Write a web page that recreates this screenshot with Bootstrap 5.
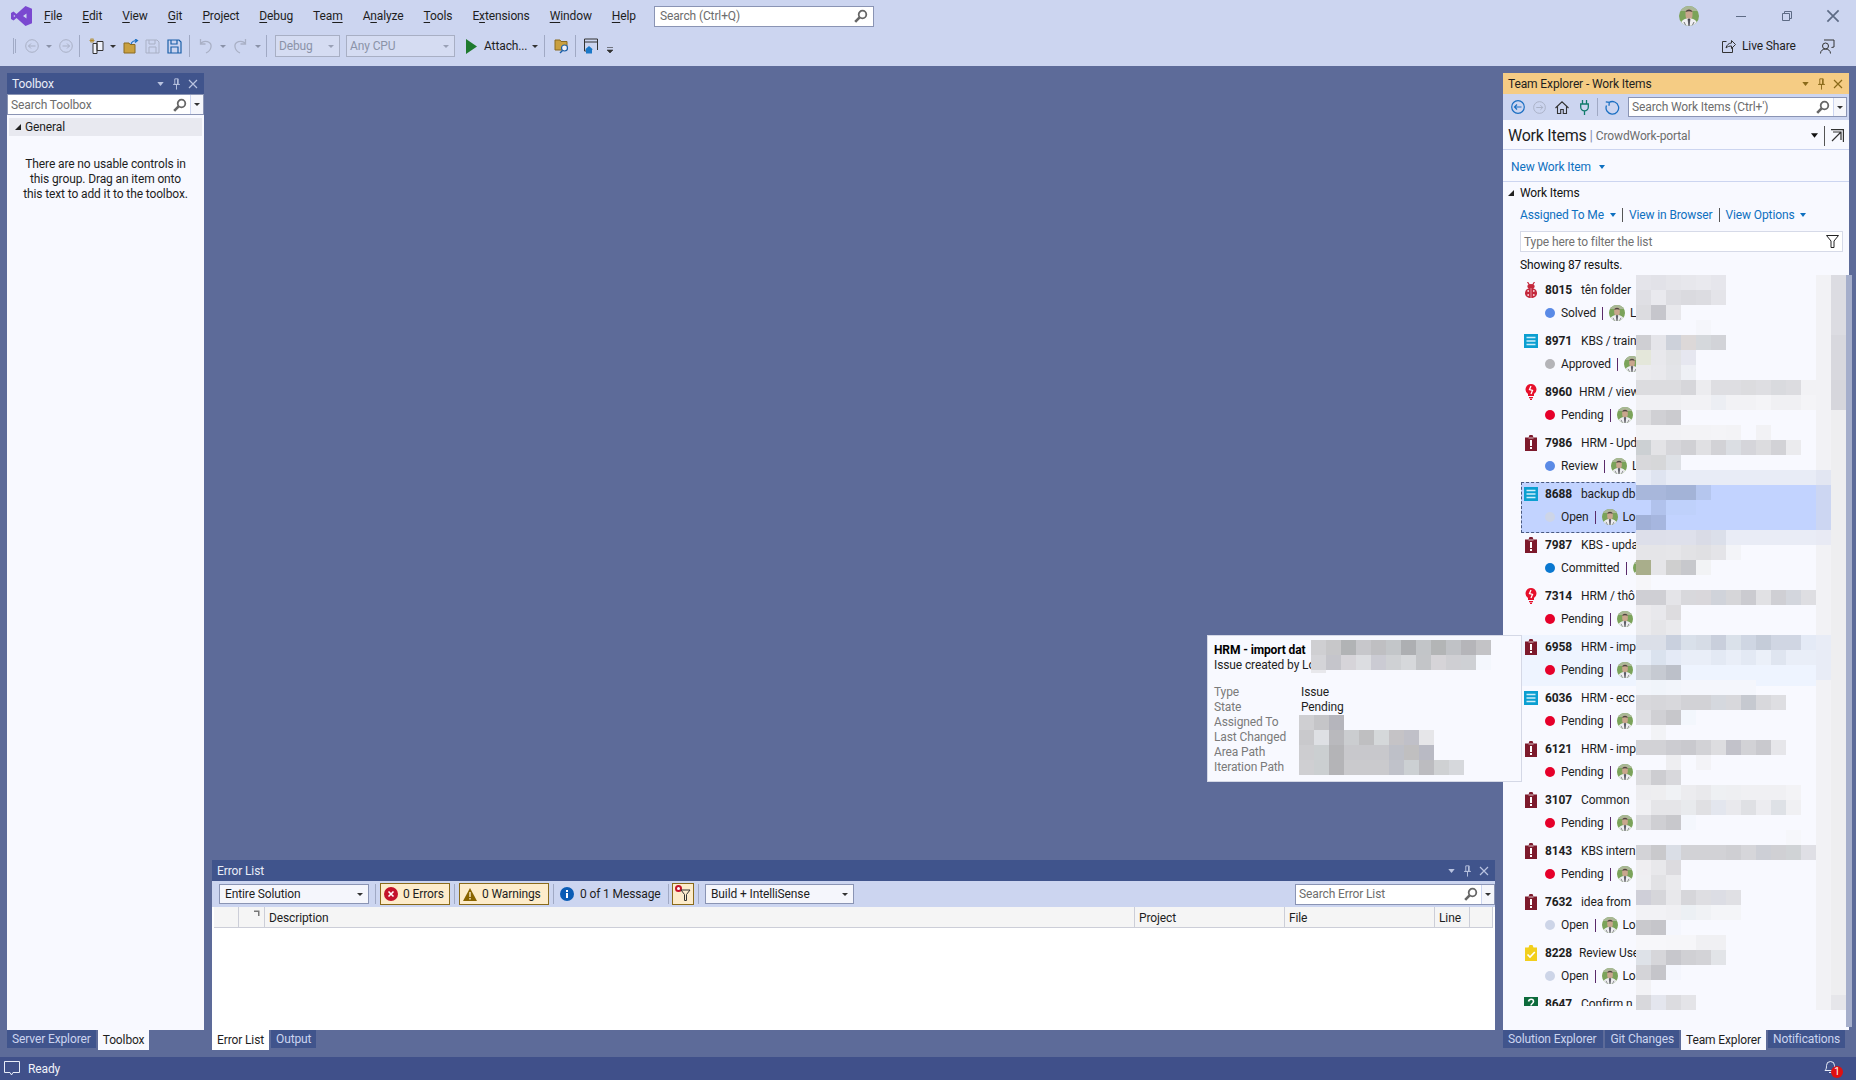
<!DOCTYPE html>
<html lang="en">
<head>
<meta charset="utf-8">
<title>Visual Studio</title>
<link href="https://cdn.jsdelivr.net/npm/bootstrap@5.3.0/dist/css/bootstrap.min.css" rel="stylesheet">
<style>
html,body{height:1080px;overflow:hidden}
body{background:#5d6b99;font:12px/16px Roboto,"Noto Sans",sans-serif;color:#1e1e1e;letter-spacing:-.12px;white-space:nowrap}
svg{display:block;flex:none}
.chrome{height:66px;background:#ccd5f0}
.menurow{height:32px;padding-left:11px}
.menus{gap:20px;margin-left:12px;color:#1e1e1e}
.menus u{text-underline-offset:2px}
.qsearch{width:220px;height:21px;margin-left:18px;background:#fff;border:1px solid #8a94b4;color:#6d6d6d;padding:0 5px}
.tools{height:28px;padding-left:12px}
.vsep{width:1px;height:22px;background:#a0a9c4;margin:0 9px;flex:none}
.combo{height:22px;background:#d5dcf2;border:1px solid #a8afc4;color:#8b93a8;padding:0 3px}
.tri{width:0;height:0;border-left:3px solid transparent;border-right:3px solid transparent;border-top:3px solid #333;flex:none}
.main{height:991px;padding:7px 4px 7px 7px}
.leftcol{width:197px}
.centercol{width:1283px;margin:0 8px}
.rightcol{width:346px}
.ptitle{height:21px;background:#40548c;color:#e9edf8;padding:0 6px 0 5px;flex:none}
.ptitle .gl{gap:7px}
.ptitle.active{background:#f5cc84;color:#1e1e1e}
.pbody{background:#f8f9ff}
.sbox{background:#fff;height:21px;border:1px solid #8a94b4;color:#6d6d6d;padding:0 3px}
.sbox .dd{width:13px;height:100%;border-left:1px solid #ccd5f0;background:#f5f6fb;margin:0 -3px 0 3px}
.general{height:18px;margin:3px 2px 0;background:#e8e9f0;padding-left:6px}
.emptymsg{margin:21px 12px 0;text-align:center;line-height:15px;color:#1e1e1e;white-space:normal}
.tabs{height:20px;gap:2px;flex:none}
.tabx{height:18px;background:#40548c;color:#ccd5f0;padding:0 5px}
.tabx.on{height:20px;background:#f8f9ff;color:#1e1e1e}
.tabx.onw{height:20px;background:#fff;color:#1e1e1e}
.elist{height:170px;margin-top:auto;background:#fff;flex:none}
.etools{height:26px;background:#ccd5f0;padding:0 0 0 7px}
.ecombo{height:20px;background:#f5f6fc;border:1px solid #8a94b4;padding:0 5px;color:#1e1e1e}
.esep{width:1px;height:20px;background:#a0a9c4;margin:0 4px;flex:none}
.ebtn{height:22px;background:#fdeccb;border:1px solid #8a6a1a;padding:0 6px 0 3px;gap:5px}
.ehead{height:21px;background:#f5f5f5;border-bottom:1px solid #ccced8;margin-left:2px;margin-right:2px}
.ecol{height:100%;border-right:1px solid #ccced8;padding:1px 0 0 4px;flex:none}
.ebody{height:102px;background:#fff}
.tebar{height:26px;background:#ccd5f0;padding:0 0 0 8px;flex:none}
.tehead{height:30px;border-bottom:1px solid #ccd5f0;padding:2px 5px 0}
.tehead b{font-weight:400;font-size:16px;letter-spacing:-.25px;color:#1e1e1e}
.lnk{color:#0e70c0}
.tri.blue{border-top-color:#0e70c0;border-left-width:3.5px;border-right-width:3.5px;border-top-width:4px}
.thinsep{width:1px;height:14px;background:#555;flex:none}
.newrow{height:32px;border-bottom:1px solid #ccd5f0;padding:2px 0 0 8px}
.wrap{flex:1 1 0;position:relative;min-height:0}
.sechead{height:22px;padding-left:5px;color:#111;gap:6px}
.links{height:22px;padding-left:17px}
.filterbox{height:21px;margin:5px 6px 0 17px;background:#fff;border:1px solid #d6dae8;color:#717171;padding:0 3px 0 3px}
.showing{height:26px;padding-left:17px;color:#111}
.wlist{height:728px;overflow:hidden;position:relative}
.witem{height:51px;width:310px;margin-left:18px;padding-left:2px;border:1px solid transparent}
.witem.sel{background:#c2d3ff;border:1px dashed #4a5a80;border-right-color:transparent}
.witem.hov{background:#eef4ff}
.wclip{width:115px;overflow:hidden;height:100%}
.wl1{height:22px;gap:7px}
.wl1 b{font-weight:700;color:#1e1e1e;width:29px}
.wl1 span{color:#1e1e1e}
.wl2{height:24px;gap:5px;padding-left:21px;color:#1e1e1e}
.dotx{width:10px;height:10px;border-radius:50%;flex:none;margin-right:1px}
.pipe{width:1px;height:13px;background:#5a2a6a;flex:none;margin:0 1px}
.mosaic{position:absolute;pointer-events:none}
.tip{position:absolute;left:1207px;top:635px;width:315px;height:147px;background:#f8f9ff;border:1px solid #d4d8e6;padding:7px 6px;line-height:15px}
.tip b{font-weight:700;color:#000}
.tipgrid{margin-top:12px}
.tipk{width:87px;color:#7a7a7a}
.statusbar{height:23px;background:#40508a;color:#f1f3fa;padding:0 12px 0 4px}
</style>
</head>
<body>
<svg width="0" height="0" style="position:absolute">
<defs>
<clipPath id="avc"><circle cx="10" cy="10" r="10"/></clipPath>
<symbol id="av" viewBox="0 0 20 20"><g clip-path="url(#avc)"><rect width="20" height="20" fill="#7ba35a"/><rect width="20" height="5" fill="#a9b896"/><path d="M6.500 5c1-2.500 6-2.500 7 0v4a3.500 4.500 0 0 1-7 0z" fill="#c9a68e"/><path d="M6.500 6c.5-3.500 6.500-3.500 7 0-2-1-5-1-7 0z" fill="#4a4540"/><path d="M1.500 20c0-6 4-7.500 8.500-7.500s8.500 1.500 8.500 7.500z" fill="#efeff2"/><path d="M9 13l1 7 1-7zM5 16l2 4M15 16l-2 4" fill="#3f3f48" stroke="#3f3f48" stroke-width=".7"/></g></symbol>
<symbol id="doc" viewBox="0 0 14 14"><rect width="14" height="14" fill="#0b9fd1"/><path d="M2.500 3.500h9M2.500 7h9M2.500 10.500h9" stroke="#cfeefa" stroke-width="1.400"/></symbol>
<symbol id="iss" viewBox="0 0 14 16"><path d="M1 2.500h3.500L5.500 0h3l1 2.500H13V16H1z" fill="#7d1a2c"/><path d="M6 5h2v6H6zM6 12h2v2H6z" fill="#fff"/><path d="M4.500 2.500h5v1h-5z" fill="#fff" opacity=".75"/></symbol>
<symbol id="bulb" viewBox="0 0 14 16"><path d="M7 0a5.400 5.400 0 0 0-3 9.900V12h6V9.900A5.400 5.400 0 0 0 7 0z" fill="#e6102b"/><path d="M5 13h4v1.200H5zM6 14.800h2V16H6z" fill="#e6102b"/><path d="M7 2 5.500 5.500 8.500 6.500 7 10" stroke="#fff" stroke-width="1.300" fill="none"/></symbol>
<symbol id="bug" viewBox="0 0 14 16"><path d="M3.500 0l2 3M10.500 0l-2 3" stroke="#c4283c" stroke-width="1.200"/><ellipse cx="7" cy="4.500" rx="3.600" ry="2.400" fill="#c4283c"/><path d="M7 6C3 6 1 8.500 1 11.200 1 14 3.500 16 7 16s6-2 6-4.800C13 8.500 11 6 7 6z" fill="#c4283c"/><path d="M7 6v10" stroke="#f0b8c0" stroke-width=".7"/><circle cx="4.200" cy="9" r=".9" fill="#f8d8dc"/><circle cx="9.800" cy="9" r=".9" fill="#f8d8dc"/><circle cx="4.200" cy="13" r=".9" fill="#f8d8dc"/><circle cx="9.800" cy="13" r=".9" fill="#f8d8dc"/></symbol>
<symbol id="chk" viewBox="0 0 14 16"><path d="M1 2.500h3.500L5.500 0h3l1 2.500H13V16H1z" fill="#f2cf1d"/><path d="M3.500 9.500l2.500 2.500 4.800-5" stroke="#fff" stroke-width="1.600" fill="none"/></symbol>
<symbol id="qm" viewBox="0 0 14 14"><rect width="14" height="14" fill="#0d6b3c"/><path d="M4.500 4.500C5 1.500 9.500 1.500 9.500 4.500c0 2-2.500 2-2.500 4M7 10v2" stroke="#fff" stroke-width="1.600" fill="none"/></symbol>
<symbol id="mag" viewBox="0 0 14 14"><circle cx="8.500" cy="5.500" r="3.800" fill="none" stroke="#666" stroke-width="1.800"/><path d="M5.600 8.400 1.200 12.800" stroke="#666" stroke-width="2.600"/></symbol>
<symbol id="pin" viewBox="0 0 10 14"><path d="M3 1h4v6.500H3zM1 7.500h8M5 8v5.500M6.200 1.500v5.500" stroke="currentColor" stroke-width="1.100" fill="none"/></symbol>
<symbol id="xx" viewBox="0 0 10 10"><path d="M1 1l8 8M9 1l-8 8" stroke="currentColor" stroke-width="1.200"/></symbol>
<symbol id="dn" viewBox="0 0 8 5"><path d="M0 0h8L4 5z" fill="currentColor"/></symbol>
</defs>
</svg>

<header class="chrome">
  <div class="menurow d-flex align-items-center">
    <svg width="21" height="20" viewBox="0 0 21 20"><path fill-rule="evenodd" d="M14.500 0 21 2.800V17.200L14.500 20 5.500 12 2.500 14.500 0 13V7L2.500 5.500 5.500 8zM15.500 7.500 12 10 15.500 12.500zM2.800 8.800v2.400L4.300 10z" fill="#7a48d0"/></svg>
    <nav class="menus d-flex">
      <span><u>F</u>ile</span><span><u>E</u>dit</span><span><u>V</u>iew</span><span><u>G</u>it</span><span><u>P</u>roject</span><span><u>D</u>ebug</span><span>Tea<u>m</u></span><span>A<u>n</u>alyze</span><span><u>T</u>ools</span><span>E<u>x</u>tensions</span><span><u>W</u>indow</span><span><u>H</u>elp</span>
    </nav>
    <div class="qsearch d-flex align-items-center justify-content-between"><span>Search (Ctrl+Q)</span><svg width="14" height="14"><use href="#mag"/></svg></div>
    <div class="ms-auto d-flex align-items-center" style="margin-right:16px">
      <svg width="20" height="20"><use href="#av"/></svg>
      <svg width="10" height="10" viewBox="0 0 10 10" style="margin-left:37px"><path d="M0 5.500h10" stroke="#5d6b85"/></svg>
      <svg width="10" height="10" viewBox="0 0 10 10" style="margin-left:36px"><path d="M.5 2.500h7v7h-7zM2.500 2.500v-2h7v7h-2" stroke="#5d6b85" fill="none"/></svg>
      <svg width="14" height="14" viewBox="0 0 10 10" style="margin-left:34px;color:#5d6b85"><use href="#xx"/></svg>
    </div>
  </div>
  <div class="tools d-flex align-items-center">
    <svg width="5" height="17" viewBox="0 0 5 17"><path d="M1 1h1M3 2h1M1 3h1M3 4h1M1 5h1M3 6h1M1 7h1M3 8h1M1 9h1M3 10h1M1 11h1M3 12h1M1 13h1M3 14h1M1 15h1" stroke="#77809c"/></svg>
    <svg style="margin-left:8px" width="14" height="14" viewBox="0 0 14 14"><circle cx="7" cy="7" r="6.300" fill="none" stroke="#a9b0c5"/><path d="M10.500 7h-7M6 4.500 3.500 7 6 9.500" stroke="#a9b0c5" fill="none"/></svg>
    <div class="tri" style="margin-left:7px;border-top-color:#8a92a8"></div>
    <svg style="margin-left:7px" width="14" height="14" viewBox="0 0 14 14"><circle cx="7" cy="7" r="6.300" fill="none" stroke="#a9b0c5"/><path d="M3.500 7h7M8 4.500 10.500 7 8 9.500" stroke="#a9b0c5" fill="none"/></svg>
    <div class="vsep" style="margin-left:6px"></div>
    <svg width="16" height="16" viewBox="0 0 16 16"><path d="M3 0v5M.5 2.500h5M1 .8l4 3.400M5 .8 1 4.200" stroke="#b08a2a" stroke-width=".9"/><path d="M4 5.500h4v10H4zM8 3.500h6v9H8z" fill="#eef1fa" stroke="#333"/></svg>
    <div class="tri" style="margin-left:5px"></div>
    <svg style="margin-left:7px" width="16" height="15" viewBox="0 0 16 15"><path d="M1 4h5l1 1.500h5V14H1z" fill="#c9a040" stroke="#8a6a20"/><path d="M8 5c1-3 3-3.500 6-3.500M12 0l2.500 1.500L12 3.500" stroke="#1b6fc2" fill="none" stroke-width="1.200"/></svg>
    <svg style="margin-left:6px" width="15" height="15" viewBox="0 0 15 15" fill="none" stroke="#a9b0c5"><path d="M1 1h11l2 2v11H1zM4 1v4h6V1M4 14V8h7v6"/></svg>
    <svg style="margin-left:7px" width="15" height="15" viewBox="0 0 15 15" fill="none" stroke="#1a5fa8" stroke-width="1.200"><path d="M1 1h11l2 2v11H1zM4 1v4h6V1M4 14V8h7v6"/></svg>
    <div class="vsep" style="margin-left:7px"></div>
    <svg width="14" height="16" viewBox="0 0 14 16" fill="none" stroke="#a9b0c5" stroke-width="1.300"><path d="M2 5c3-3 11-2 10 4-.5 3-3 5-5 6M1.500 1v5h5"/></svg>
    <div class="tri" style="margin-left:7px;border-top-color:#8a92a8"></div>
    <svg style="margin-left:7px" width="14" height="16" viewBox="0 0 14 16" fill="none" stroke="#a9b0c5" stroke-width="1.300"><path d="M12 5C9 2 1 3 2 9c.5 3 3 5 5 6M12.500 1v5h-5"/></svg>
    <div class="tri" style="margin-left:8px;border-top-color:#8a92a8"></div>
    <div class="vsep" style="margin-right:8px;margin-left:5px"></div>
    <div class="combo d-flex align-items-center justify-content-between" style="width:65px"><span>Debug</span><div class="tri" style="border-top-color:#99a0b5;margin-right:2px"></div></div>
    <div class="combo d-flex align-items-center justify-content-between" style="width:109px;margin-left:6px"><span>Any CPU</span><div class="tri" style="border-top-color:#99a0b5;margin-right:2px"></div></div>
    <svg style="margin-left:11px" width="11" height="15" viewBox="0 0 11 15"><path d="M0 0l11 7.500L0 15z" fill="#1e7a2e"/></svg>
    <span style="margin-left:7px;width:43px">Attach...</span>
    <div class="tri" style="margin-left:5px"></div>
    <div class="vsep" style="margin-left:6px"></div>
    <svg width="16" height="16" viewBox="0 0 16 16"><path d="M1 2h5l1 1.500h6V12H1z" fill="#c9a040" stroke="#8a6a20"/><circle cx="10.500" cy="10" r="3" fill="#eef1fa" stroke="#1a5fa8" stroke-width="1.200"/><path d="M8.500 12.500 6 15" stroke="#1a5fa8" stroke-width="1.500"/></svg>
    <div class="vsep" style="margin-left:5px;margin-right:8px"></div>
    <svg width="15" height="16" viewBox="0 0 15 16"><path d="M.5 1h13v11" fill="none" stroke="#333"/><path d="M.5 1v12h6M.5 4h13" fill="none" stroke="#333"/><path d="M2 15.500v-4h-1l4-3.500 4 3.500H8v4z" fill="#1a78c8"/></svg>
    <svg style="margin-left:8px;margin-top:8px" width="6" height="7" viewBox="0 0 6 7"><path d="M0 .5h6M0 3h6l-3 3z" fill="#333" stroke="#333" stroke-width=".6"/></svg>
    <div class="ms-auto d-flex align-items-center" style="margin-right:21px">
      <svg width="14" height="14" viewBox="0 0 14 14" fill="none" stroke="#333"><path d="M4.500 2.500H.5v11h10V9M4 9c.5-3 3-5 5.500-5V1.500l4 4-4 4V7C7.500 7 5.500 7.500 4 9z"/></svg>
      <span style="margin-left:6px;width:53px">Live Share</span>
      <svg style="margin-left:25px" width="15" height="15" viewBox="0 0 15 15" fill="none" stroke="#333"><circle cx="5.500" cy="7" r="3"/><path d="M.5 14.500c0-6 10-6 10 0M4 1h10v7l-2.500.5"/></svg>
    </div>
  </div>
</header>

<main class="main d-flex">
  <section class="leftcol d-flex flex-column">
    <div class="ptitle d-flex align-items-center justify-content-between">
      <span>Toolbox</span>
      <div class="gl d-flex align-items-center" style="color:#b9c3e0"><svg width="7" height="4" style="margin-right:1px"><use href="#dn"/></svg><svg width="9" height="12"><use href="#pin"/></svg><svg width="10" height="10"><use href="#xx"/></svg></div>
    </div>
    <div class="pbody flex-grow-1">
      <div class="sbox d-flex align-items-center justify-content-between"><span class="flex-grow-1">Search Toolbox</span><svg width="14" height="14"><use href="#mag"/></svg><div class="dd d-flex align-items-center justify-content-center"><div class="tri"></div></div></div>
      <div class="general d-flex align-items-center gap-1"><svg width="6" height="6" viewBox="0 0 6 6"><path d="M6 0v6H0z" fill="#222"/></svg><span>General</span></div>
      <p class="emptymsg mb-0">There are no usable controls in this group. Drag an item onto this text to add it to the toolbox.</p>
    </div>
    <div class="tabs d-flex"><div class="tabx d-flex align-items-center">Server Explorer</div><div class="tabx on d-flex align-items-center">Toolbox</div></div>
  </section>

  <section class="centercol d-flex flex-column">
    <div class="elist d-flex flex-column">
      <div class="ptitle d-flex align-items-center justify-content-between">
        <span>Error List</span>
        <div class="gl d-flex align-items-center" style="color:#b9c3e0"><svg width="7" height="4" style="margin-right:1px"><use href="#dn"/></svg><svg width="9" height="12"><use href="#pin"/></svg><svg width="10" height="10"><use href="#xx"/></svg></div>
      </div>
      <div class="etools d-flex align-items-center">
        <div class="ecombo d-flex align-items-center justify-content-between" style="width:150px"><span>Entire Solution</span><div class="tri"></div></div>
        <div class="esep" style="margin-left:6px"></div>
        <div class="ebtn d-flex align-items-center" style="width:70px"><svg width="14" height="14" viewBox="0 0 14 14"><circle cx="7" cy="7" r="7" fill="#c4122a"/><path d="M4.500 4.500l5 5M9.500 4.500l-5 5" stroke="#fff" stroke-width="1.600"/></svg><span>0 Errors</span></div>
        <div class="esep"></div>
        <div class="ebtn d-flex align-items-center" style="width:90px"><svg width="14" height="13" viewBox="0 0 14 13"><path d="M7 0l7 13H0z" fill="#8a6400"/><path d="M6.300 4h1.400v5H6.300zM6.300 10h1.400v1.500H6.300z" fill="#fdeccb"/></svg><span>0 Warnings</span></div>
        <div class="esep"></div>
        <svg style="margin-left:2px" width="14" height="14" viewBox="0 0 14 14"><circle cx="7" cy="7" r="7" fill="#0a5cb5"/><path d="M6 6h2v5H6zM6 3h2v2H6z" fill="#fff"/></svg>
        <span style="margin-left:6px;width:78px">0 of 1 Message</span>
        <div class="esep" style="margin-left:10px;margin-right:3px"></div>
        <div class="ebtn d-flex align-items-center justify-content-center" style="width:22px;padding:0"><svg width="16" height="18" viewBox="0 0 16 18"><circle cx="3.500" cy="3.500" r="2.500" fill="#fff" stroke="#c4122a" stroke-width="2"/><path d="M6 5h9l-3.500 4.500v6h-2v-6z" fill="none" stroke="#333"/></svg></div>
        <div class="esep"></div>
        <div class="ecombo d-flex align-items-center justify-content-between" style="width:149px;margin-left:2px"><span>Build + IntelliSense</span><div class="tri"></div></div>
        <div class="sbox ms-auto d-flex align-items-center justify-content-between" style="width:200px"><span class="flex-grow-1">Search Error List</span><svg width="14" height="14"><use href="#mag"/></svg><div class="dd d-flex align-items-center justify-content-center"><div class="tri"></div></div></div>
      </div>
      <div class="ehead d-flex align-items-center">
        <div class="ecol" style="width:25px"></div>
        <div class="ecol position-relative" style="width:26px"><svg class="position-absolute" style="left:15px;top:3px" width="6" height="6" viewBox="0 0 6 6"><path d="M0 .5h5.500V6H4V2H0z" fill="#777"/></svg></div>
        <div class="ecol d-flex align-items-center" style="width:870px">Description</div>
        <div class="ecol d-flex align-items-center" style="width:150px">Project</div>
        <div class="ecol d-flex align-items-center" style="width:150px">File</div>
        <div class="ecol d-flex align-items-center" style="width:35px">Line</div>
        <div class="ecol" style="width:23px"></div>
      </div>
      <div class="ebody"></div>
    </div>
    <div class="tabs d-flex"><div class="tabx onw d-flex align-items-center">Error List</div><div class="tabx d-flex align-items-center">Output</div></div>
  </section>

  <section class="rightcol d-flex flex-column">
    <div class="ptitle active d-flex align-items-center justify-content-between">
      <span>Team Explorer - Work Items</span>
      <div class="gl d-flex align-items-center" style="color:#8a6a1a"><svg width="7" height="4" style="margin-right:1px"><use href="#dn"/></svg><svg width="9" height="12"><use href="#pin"/></svg><svg width="10" height="10"><use href="#xx"/></svg></div>
    </div>
    <div class="tebar d-flex align-items-center">
      <svg width="14" height="14" viewBox="0 0 14 14"><circle cx="7" cy="7" r="6.300" fill="none" stroke="#1b6fc2" stroke-width="1.200"/><path d="M10.500 7h-7M6 4.500 3.500 7 6 9.500" stroke="#1b6fc2" fill="none" stroke-width="1.200"/></svg>
      <svg style="margin-left:8px" width="13" height="13" viewBox="0 0 14 14"><circle cx="7" cy="7" r="6.300" fill="none" stroke="#a9b0c5"/><path d="M3.500 7h7M8 4.500 10.500 7 8 9.500" stroke="#a9b0c5" fill="none"/></svg>
      <svg style="margin-left:9px" width="14" height="13" viewBox="0 0 14 13" fill="none" stroke="#333" stroke-width="1.100"><path d="M.5 7 7 .8 13.500 7M2.500 5.500v7h3.200V8.500h2.600v4h3.200v-7"/></svg>
      <svg style="margin-left:11px" width="9" height="15" viewBox="0 0 9 15" fill="none" stroke="#0f7a6a" stroke-width="1.300"><path d="M2.500 0v4M6.500 0v4M.7 4h7.600v3a3.800 3.800 0 0 1-7.600 0zM4.500 10.500V15"/></svg>
      <div class="vsep" style="margin-left:8px;margin-right:7px;height:18px"></div>
      <svg width="15" height="15" viewBox="0 0 15 15" fill="none" stroke="#1b6fc2" stroke-width="1.300"><path d="M4 2.500a6.300 6.300 0 1 1-2.500 3M.8 1.800l3.500.5-.3 3.500"/></svg>
      <div class="sbox d-flex align-items-center justify-content-between" style="width:219px;margin-left:8px;height:20px"><span class="flex-grow-1">Search Work Items (Ctrl+')</span><svg width="14" height="14"><use href="#mag"/></svg><div class="dd d-flex align-items-center justify-content-center"><div class="tri"></div></div></div>
    </div>
    <div class="pbody wrap">
      <div class="tehead d-flex align-items-center">
        <b>Work Items</b><span style="margin:0 3px;color:#8a94b4;font-size:14px">|</span><span style="color:#6d6d6d">CrowdWork-portal</span>
        <svg class="ms-auto" width="7" height="5" style="color:#111"><use href="#dn"/></svg>
        <div class="thinsep" style="height:20px;margin:0 6px"></div>
        <svg width="13" height="13" viewBox="0 0 13 13" fill="none" stroke="#333" stroke-width="1.200"><path d="M0 .6h13M12.400 0v13M2 3h8v8M10 3 1 12"/></svg>
      </div>
      <div class="newrow d-flex align-items-center gap-2"><span class="lnk">New Work Item</span><div class="tri blue"></div></div>
      <div class="sechead d-flex align-items-center"><svg width="6" height="6" viewBox="0 0 6 6"><path d="M6 0v6H0z" fill="#222"/></svg><span>Work Items</span></div>
      <div class="links d-flex align-items-center"><span class="lnk">Assigned To Me</span><div class="tri blue" style="margin-left:6px"></div><div class="thinsep" style="margin:0 6px"></div><span class="lnk">View in Browser</span><div class="thinsep" style="margin:0 6px"></div><span class="lnk">View Options</span><div class="tri blue" style="margin-left:6px"></div></div>
      <div class="filterbox d-flex align-items-center justify-content-between"><span>Type here to filter the list</span><svg width="13" height="13" viewBox="0 0 13 13" fill="none" stroke="#222"><path d="M.5.500h12L8 6v6.500H5V6z"/></svg></div>
      <div class="showing d-flex align-items-center">Showing 87 results.</div>
      <div class="wlist" id="wl"></div>
    </div>
    <div class="tabs d-flex"><div class="tabx d-flex align-items-center" style="padding-right:7px">Solution Explorer</div><div class="tabx d-flex align-items-center">Git Changes</div><div class="tabx on d-flex align-items-center">Team Explorer</div><div class="tabx d-flex align-items-center">Notifications</div></div>
  </section>
</main>

<footer class="statusbar d-flex align-items-center">
  <svg width="16" height="15" viewBox="0 0 16 15" fill="none" stroke="#e8ecf8"><path d="M.5.500h15v11H9L7.500 14 6 11.500H.5z"/></svg>
  <span style="margin-left:8px">Ready</span>
  <div class="ms-auto position-relative" style="width:20px;height:20px">
    <svg width="13" height="15" viewBox="0 0 13 15" fill="none" stroke="#e8ecf8"><path d="M1 11.500c1.500-1.500 1.500-3 1.500-5a4 4 0 0 1 8 0c0 2 0 3.500 1.500 5zM5 13.500h3"/></svg>
    <span class="position-absolute d-flex align-items-center justify-content-center" style="left:7px;top:7px;width:12px;height:12px;border-radius:50%;background:#e01010;color:#fff;font-size:10px;line-height:1">1</span>
  </div>
</footer>

<div class="tip">
  <div><b>HRM - import dat</b></div>
  <div>Issue created by Lo</div>
  <div class="tipgrid">
    <div class="d-flex"><span class="tipk">Type</span><span>Issue</span></div>
    <div class="d-flex"><span class="tipk">State</span><span>Pending</span></div>
    <div class="d-flex"><span class="tipk">Assigned To</span></div>
    <div class="d-flex"><span class="tipk">Last Changed</span></div>
    <div class="d-flex"><span class="tipk">Area Path</span></div>
    <div class="d-flex"><span class="tipk">Iteration Path</span></div>
  </div>
</div>
<svg id="mos" class="mosaic" style="left:0;top:0" width="1856" height="1080"></svg>

<script>
const items=[["bug","8015","tên folder","Solved","#5a8ae6","L"],["doc","8971","KBS / train","Approved","#b4b4b8",""],["bulb","8960","HRM / view","Pending","#e6002a",""],["iss","7986","HRM - Upd","Review","#5a8ae6","L"],["doc","8688","backup db","Open","#cdd5e8","Lo","sel"],["iss","7987","KBS - upda","Committed","#0a78d0",""],["bulb","7314","HRM / thô","Pending","#e6002a",""],["iss","6958","HRM - imp","Pending","#e6002a","","hov"],["doc","6036","HRM - ecc","Pending","#e6002a",""],["iss","6121","HRM - imp","Pending","#e6002a",""],["iss","3107","Common","Pending","#e6002a",""],["iss","8143","KBS intern","Pending","#e6002a",""],["iss","7632","idea from","Open","#cdd5e8","Lo"],["chk","8228","Review Use","Open","#cdd5e8","Lo"],["qm","8647","Confirm n","","",""]];
document.getElementById("wl").innerHTML=items.map(i=>`<div class="witem ${i[6]||""}"><div class="wclip">
<div class="wl1 d-flex align-items-center"><svg width="14" height="${i[0]=="doc"||i[0]=="qm"?14:16}"><use href="#${i[0]}"/></svg><b>${i[1]}</b><span>${i[2]}</span></div>
${i[3]?`<div class="wl2 d-flex align-items-center"><i class="dotx" style="background:${i[4]}"></i><span>${i[3]}</span><i class="pipe"></i><svg width="16" height="16"><use href="#av"/></svg><span>${i[5]}</span></div>`:""}</div></div>`).join("");
const R=(x0,y0,rows)=>rows.map((r,k)=>(r||"").split(" ").map((c,j)=>c&&c!="-"?`<rect x="${x0+j*15}" y="${y0+k*15}" width="15" height="15" fill="#${c}"/>`:"").join("")).join("");
const L="f2f2f5",M="eeeef0",D="dcdce2";
const side=(r,a,b)=>{let c=r.split(" ");while(c.length<12)c.push("-");c[12]=a;c[13]=b;return c.join(" ")};
const list=[
side("e4e4ea e2e2e8 e5e5ea e7e7ec e9e9ee e6e6ec",L,D),
side("dfdfe4 e9e9ee dddde2 dadadf dcdce1 e4e4e9",L,D),
side("dcdce0 c6c6cc e8e8ec",L,D),
side("- - - - f5f6fb",L,D),
side("cfcfd3 e5e5ea cdd1da dcd8d8 d5d8dc d2d3d8",L,"d8d8de"),
side("e4e7da e8e8ec e2e3e6 e6e7f0",L,"d8d8de"),
side("ebebee e9e9ed e3e4e8 eef0f5",L,"d8d8de"),
side("dcdcdf dcdcdf dcdcdf d6d6da ececef dedee2 dedee2 dcdcdf dedee2 d9dade dcdce0 f2f2f5",L,"d6d6dc"),
side("f0f0f3 f0f0f3 f0f0f3 f2f2f5 f2f2f5 eceef3 f2f2f5 f2f2f5 f4f4f7 f0f0f3 f0f0f3 f4f4f7",L,"d6d6dc"),
side("dddde0 d0d0d4 cbcbcf",L,M),
side("f2f2f5 f2f2f5 f2f2f5 f3f3f6 f3f3f6 f4f4f7 f3f3f6 - f2f2f5",L,M),
side("ccd0d3 e3e3e6 d6d6da d0d0d4 e0e0e3 d2d2d6 dbdee3 d5d5da dcdcdf d2d2d6 ebebee",L,M),
side("d8d8db d6d7d9 dee1e6",L,M),
side("e8ecf6 dfe4f0 e8ecf6 e8ecf6 e8ecf6 e8ecf6 e8ecf6 e8ecf6 e8ecf6 e8ecf6 e8ecf6 e8ecf6","e2e6f2",M),
side("a8b7db a8b7db a3b3d7 a3b3d7 b5c6ee","ccd6f2",M),
side("- b1c2ec bfd1fb bfd1fb","ccd6f2",M),
side("a1b1d8 a6b6df","ccd6f2",M),
side("dddfea dddfea dee0eb dee0eb d9dbe6 dbdfea e9ecf6 e9ecf6 e9ecf6 e9ecf6 e9ecf6 e9ecf6","e8eaf4",M),
side("e5e5e8 e5e5e8 e6e6e9 e2e2e5 e0e0e3 e4e4e8 f3f4f8",L,M),
side("a9ae8b e5e5e8 cfcfcf c7c8cc f2f3f5",L,M),
side("f6f6f9",L,M),
side("cfcfd4 cfcfd4 e4e4e8 d8d8dc d9d7db d0d3da d6d6d9 cbcbd0 e1e1e4 cfcfd4 d3d6dd dedee2",L,M),
side("ecebee e8e8ec dddcdf",L,M),
side("ebebee e5e5e8 eaeaed",L,M),
side("dbdfe8 dbdfe8 c9d0de d9e0ea d6dce6 c9cfdc dae1ea cfd6e3 c5ccd9 d0d6e3 d0d6e3 e4eaf6","e8ecf6",M),
side("e8eef8 dae2ee e4eaf6 e9eef8 e9eef8 e3e9f4 e9eef8 e3e9f4 ebf0f9 dfe5f0 e9eef8 e9eef8","e8ecf6",M),
side("cfd3da c6cad2 bcc0c9","e8ecf6",M),
side("f2f5fb f0f4fa f2f5fb f4f6fc f4f6fc f4f6fc f4f6fc f4f6fc",L,M),
side("d8d8dc d6d6da d8d8dc d2d2d6 d2d2d6 d5d8de d8d8dc c6c9d0 d8d8dc dedee2",L,M),
side("dedee2 d0d0d4 c7c7cb f3f7fd",L,M),
side("- f2f3f6",L,M),
side("d2d2d6 d2d2d6 ccccd1 c9c9ce d2d2d6 dddde0 c2c2ca d2d2d6 c9c9ce e6e6ea",L,M),
side("- - eeeef1 - f3f3f7",L,M),
side("dddde0 cdcdd1 d8d8dc",L,M),
side("ededf0 eeeef0 f0f2f5 ececef e9e9ec eef0f3 eeeff2 f0f0f3 f0f0f3 f0f0f3 f3f3f6",L,M),
side("f0f0f3 e5e5e8 e5e5e8 e8eaed e0e0e3 e3e6ee e9e9ed dfe0e4 ececf0 dee1e6 f0f0f3",L,M),
side("dcdce0 cfcfd3 c8c8cc f4f7fd",L,M),
side("- - - - - - - - - - f6f7fb",L,M),
side("d3d3d7 c9c9cc dadee6 d2d2d6 d2d2d6 d2d2d6 cfcfd3 d6d6da cdcfd6 d0d0d4 d0d3d6 dfdfe5",L,M),
side("efeef1 e8e8eb dcdbdf",L,M),
side("efeff2 e2e2e5 eaeaed",L,M),
side("cfcfd8 d6d6da e8e8eb d6d6da dedee2 dcdde4 e0e0e4",L,M),
side("f2f2f5 f2f2f5 f0f0f3 ecf0f4 f0f2f5 f4f5f8 f4f5f8",L,M),
side("c9c9cd c5c5ca f4f6fd",L,M),
side("f7f7fa f7f7fa f6f6f9 f6f6f9 f0f0f3 f0f0f3",L,M),
side("dee2e8 d6d6da c7c7cc d0d0d4 d3d3d7 e2e4e8",L,M),
side("d4d4d8 c5c5ca f4f6fd",L,M),
side("f2f2f5",L,M),
side("d8d8dc e4e6ee dcdce0 e4e4e8",L,"e6e6ea")];
let h=R(1636,275,list);
h+=`<rect x="1846" y="275" width="6" height="752" fill="#a5aecb"/>`;
h+=R(1311,640,["cfcfd2 c7c7c9 b1b3b5 c7c7cb bfbfc2 c3c6c9 adafb2 c2c5c8 b3b5b6 c0c2c6 b5b5b9 c3c3c6","d4d4d8 c5c5cb d6d4d9 dcdde1 cbcbd3 cfd1d4 d6d8db c3c5c8 d6d4d8 cfcfd3 ced0d4 f4f7fd"]);
h+=`<rect x="1311" y="670" width="15" height="3" fill="#e8e8ec"/>`;
h+=R(1299,715,["cfcfd2 c5c5c8 b5b5bc","c9c9cc dee0e4 b9b9bd cbcdd0 bfbfc1 d5d8da c5c3c6 c0c0c8 e6e6e9","cdcdd0 cbcfd1 b4b4b7 c8c8cc c8c8cc c8c8cc bec0c8 c0bfc0 b9bac4","cfcfd2 cbcfd1 b4b4b7 cacacd cacacd cacacd c0c2ca ccd0d3 bcbcc0 cfd1d3 d6d8dc"]);
document.getElementById("mos").innerHTML=h;
</script>
<script src="https://cdn.jsdelivr.net/npm/bootstrap@5.3.0/dist/js/bootstrap.bundle.min.js"></script>
</body>
</html>
